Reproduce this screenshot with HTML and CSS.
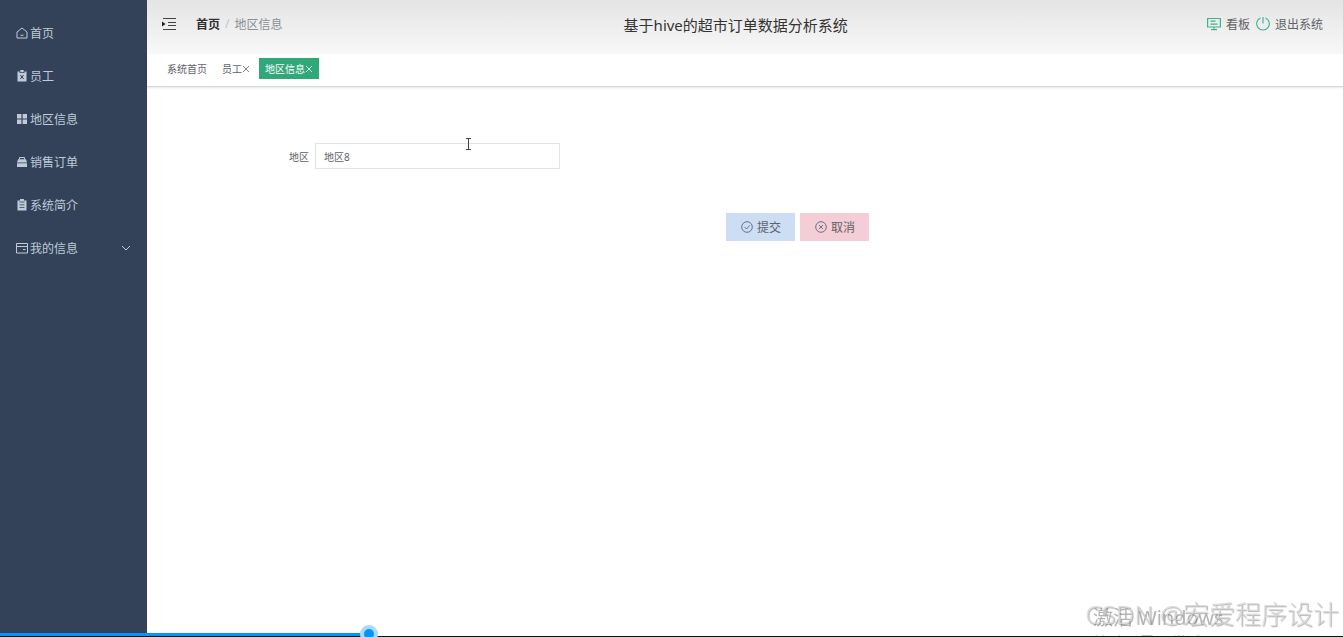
FILE: index.html
```html
<!DOCTYPE html>
<html lang="zh-CN">
<head>
    <meta charset="UTF-8">
    <meta name="viewport" content="width=device-width, initial-scale=1.0">
    <title>基于hive的超市订单数据分析系统</title>
    <link rel="stylesheet" href="styles.css">
</head>
<body>
    <div class="app">
        <nav class="sidebar">
            <a class="menu-item" href="#">
                <svg class="icon" viewBox="0 0 12 12"><path d="M1 5 6 1l5 4v6H1z M4.500 8q1.500 1 3 0" fill="none" stroke="currentColor"/></svg>
                <span>首页</span>
            </a>
            <a class="menu-item" href="#">
                <svg class="icon" viewBox="0 0 12 12"><path d="M1.500 1.500h2V3h5V1.500h2v10h-9z M4.300 0h3.400v2.200H4.300z" fill="currentColor"/><path d="m4.300 5 3.400 4m0-4L4.300 9" stroke="#334258"/></svg>
                <span>员工</span>
            </a>
            <a class="menu-item" href="#">
                <svg class="icon" viewBox="0 0 12 12"><path d="M1 1h4.400v4.400H1z M6.600 1H11v4.400H6.600z M1 6.600h4.400V11H1z M6.600 6.600H11V11H6.600z" fill="currentColor"/></svg>
                <span>地区信息</span>
            </a>
            <a class="menu-item" href="#">
                <svg class="icon" viewBox="0 0 12 12"><path d="M3.500 3.500v-2h5v2" fill="none" stroke="currentColor"/><path d="M2 3.200h8l1 3.300H1z M1 7.300h10V11H1z" fill="currentColor"/></svg>
                <span>销售订单</span>
            </a>
            <a class="menu-item" href="#">
                <svg class="icon" viewBox="0 0 12 12"><path d="M1.500 1.500h9v10h-9z M4 0h4v2H4z" fill="currentColor"/><path d="M3.500 3h5M3.500 5.800h5M3.500 8.500h5" stroke="#334258" stroke-width=".8"/></svg>
                <span>系统简介</span>
            </a>
            <a class="menu-item" href="#">
                <svg class="icon" viewBox="0 0 12 12"><path d="M.5 1.500h11v9.500H.5z M.5 4.500h11 M7 7.500h2.500" fill="none" stroke="currentColor"/></svg>
                <span>我的信息</span>
                <svg class="arrow" viewBox="0 0 10 10"><path d="m1 3 4 4 4-4" fill="none" stroke="currentColor"/></svg>
            </a>
        </nav>

        <div class="page">
            <header class="header">
                <button class="collapse" type="button" aria-label="收起菜单">
                    <svg viewBox="0 0 14 14"><path d="M1 1.500h13M6 5.500h8M6 8.500h8M1 12.500h13" stroke="#444"/><path d="M0 4.500 3.500 7 0 9.500z" fill="#222"/></svg>
                </button>
                <div class="breadcrumb">
                    <a class="crumb-home" href="#">首页</a>
                    <span class="slash">/</span>
                    <span>地区信息</span>
                </div>
                <h1 class="title">基于hive的超市订单数据分析系统</h1>
                <div class="user-links">
                    <a href="#">
                        <svg viewBox="0 0 14 14"><path d="M.6 1.500h12.800v8.500H.6z M3.500 4.200h5 M3.500 7.200h7 M7 10v2.500 M4 12.700h6" fill="none" stroke="#3db389" stroke-width="1.200"/></svg>
                        <span>看板</span>
                    </a>
                    <a href="#">
                        <svg viewBox="0 0 14 14"><path d="M4.500.9a6.300 6.300 0 1 0 5 0M7 0v6.500" fill="none" stroke="#3db389" stroke-width="1.100"/></svg>
                        <span>退出系统</span>
                    </a>
                </div>
            </header>

            <div class="tabs">
                <a class="tab" href="#">系统首页</a>
                <a class="tab" href="#">员工<svg viewBox="0 0 8 8"><path d="m1 1 6 6m0-6L1 7" stroke="currentColor" stroke-width=".8"/></svg></a>
                <a class="tab active" href="#">地区信息<svg viewBox="0 0 8 8"><path d="m1 1 6 6m0-6L1 7" stroke="currentColor" stroke-width=".8"/></svg></a>
            </div>

            <main class="main">
                <form class="form">
                    <div class="form-item">
                        <label for="area">地区</label>
                        <input type="text" id="area" value="地区8">
                    </div>
                    <div class="form-buttons">
                        <button class="btn submit" type="button">
                            <svg viewBox="0 0 12 12"><circle cx="6" cy="6" r="5.300"/><path d="m3.500 6 2 2 3.200-3.500"/></svg>
                            <span>提交</span>
                        </button>
                        <button class="btn cancel" type="button">
                            <svg viewBox="0 0 12 12"><circle cx="6" cy="6" r="5.300"/><path d="m4 4 4 4m0-4L4 8"/></svg>
                            <span>取消</span>
                        </button>
                    </div>
                </form>
            </main>
        </div>
    </div>

    <svg class="cursor" viewBox="0 0 7 12"><path d="M1 .5h5M3.500.5v11M1 11.500h5" stroke="#444" fill="none"/></svg>

    <div class="activate">
        <p class="activate-title">激活 Windows</p>
        <p class="activate-text">转到“设置”以激活 Windows。</p>
    </div>
    <div class="watermark">CSDN @宏爱程序设计</div>

    <div class="player">
        <input type="range" min="0" max="1325" value="360" aria-label="播放进度" style="--played: 27.5%">
    </div>
</body>
</html>
```
FILE: styles.css
```css
* {
    box-sizing: border-box;
}
body {
    margin: 0;
    font-family: "Noto Sans", "Noto Sans CJK SC", sans-serif;
    font-size: 12px;
    color: #606266;
    background: #fff;
    overflow: hidden;
}
a {
    color: inherit;
    text-decoration: none;
}
svg {
    flex: none;
}
button,
input {
    font-family: inherit;
}
.app {
    display: flex;
    min-height: 100vh;
}

/* sidebar */
.sidebar {
    width: 147px;
    flex: none;
    padding-top: 11px;
    background: #334258;
    color: #bfcbd9;
}
.menu-item {
    display: flex;
    align-items: center;
    gap: 2px;
    height: 43px;
    padding: 0 16px;
}
.icon {
    width: 12px;
    height: 12px;
}
.arrow {
    width: 10px;
    height: 10px;
    margin-left: auto;
}

/* header */
.page {
    flex: 1;
    min-width: 0;
}
.header {
    display: flex;
    align-items: center;
    height: 54px;
    padding: 0 20px 6px 15px;
    background: linear-gradient(#e4e4e4, #f8f8f8);
}
.collapse {
    display: flex;
    padding: 0;
    border: none;
    background: none;
    cursor: pointer;
}
.collapse svg {
    width: 14px;
    height: 14px;
}
.breadcrumb {
    display: flex;
    margin-left: 20px;
    color: #8b8e94;
}
.crumb-home {
    font-weight: bold;
    color: #303133;
}
.slash {
    margin: 0 5px;
    color: #c0c4cc;
}
.title {
    flex: 1;
    margin: 0 18px 0 0;
    text-align: center;
    font-size: 15px;
    font-weight: normal;
    color: #333;
}
.user-links {
    display: flex;
    gap: 6px;
}
.user-links a {
    display: flex;
    align-items: center;
    gap: 5px;
}
.user-links svg {
    width: 14px;
    height: 14px;
}

/* tabs */
.tabs {
    display: flex;
    align-items: center;
    gap: 3px;
    height: 33px;
    padding: 0 14px 3px;
    border-bottom: 1px solid #d8d8d8;
    box-shadow: 0 1px 2px rgba(0, 0, 0, 0.1);
}
.tab {
    display: flex;
    align-items: center;
    height: 21px;
    padding: 0 6px;
    font-size: 10px;
    color: #606266;
}
.tab svg {
    width: 8px;
    height: 8px;
}
.tab.active {
    background: #30a878;
    color: #fff;
}

/* form */
.main {
    padding: 56px 0 0 104px;
}
.form-item {
    display: flex;
    align-items: center;
    font-size: 10px;
}
.form-item label {
    width: 64px;
    padding-right: 6px;
    text-align: right;
}
.form-item input {
    width: 245px;
    height: 26px;
    padding: 0 8px;
    border: 1px solid #e4e4e0;
    font-size: 10px;
    color: #606266;
    outline: none;
}
.form-buttons {
    display: flex;
    justify-content: center;
    gap: 5px;
    margin-top: 44px;
}
.btn {
    display: flex;
    align-items: center;
    justify-content: center;
    gap: 4px;
    width: 69px;
    height: 28px;
    padding: 0 0 0 2px;
    border: none;
    font-size: 12px;
    color: #606266;
    cursor: pointer;
}
.btn svg {
    width: 12px;
    height: 12px;
    fill: none;
    stroke: #606878;
    stroke-width: 0.9;
}
.submit {
    background: #ccddf4;
}
.cancel {
    background: #f4cdd7;
}

/* overlays */
.cursor {
    position: absolute;
    left: 465px;
    top: 138px;
    width: 7px;
    height: 12px;
}
.activate {
    position: fixed;
    right: 80px;
    bottom: 0;
    width: 170px;
    height: 32px;
    overflow: hidden;
    color: #b4b4b4;
    white-space: nowrap;
}
.activate p {
    margin: 0;
}
.activate-title {
    font-size: 20px;
    line-height: 26px;
}
.activate-text {
    font-size: 14px;
    line-height: 22px;
}
.watermark {
    position: fixed;
    right: 4px;
    bottom: 5px;
    font-size: 26px;
    line-height: 36px;
    font-weight: 300;
    color: rgba(215, 215, 215, 0.8);
    text-shadow: 1px 1px 1px rgba(100, 100, 100, 0.5);
    white-space: nowrap;
}

/* playback bar */
.player {
    position: fixed;
    left: 0;
    right: 0;
    bottom: 0;
    height: 12px;
    overflow: hidden;
}
.player input {
    appearance: none;
    display: block;
    width: 100%;
    height: 18px;
    margin: 0;
    background:
        linear-gradient(#0593ff, #0593ff) 0 8px / var(--played) 3px no-repeat,
        linear-gradient(#111, #111) 0 11px / 100% 1px no-repeat;
}
.player input::-webkit-slider-thumb {
    appearance: none;
    width: 18px;
    height: 18px;
    border: 4px solid #a9d9ff;
    border-radius: 50%;
    background: #0593ff;
}
```
